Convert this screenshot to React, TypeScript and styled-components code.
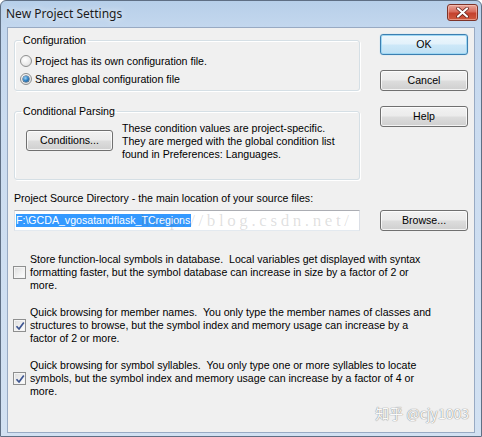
import styled, { createGlobalStyle, css } from 'styled-components';

const GlobalStyle = createGlobalStyle`
	html, body {
		margin: 0;
		padding: 0;
		background: #ffffff;
	}
	* {
		box-sizing: border-box;
	}
`;

const uiFont = `"Liberation Sans", Arial, sans-serif`;

const checkItems = [
	[
		'Store function-local symbols in database.  Local variables get displayed with syntax',
		'formatting faster, but the symbol database can increase in size by a factor of 2 or',
		'more.',
	],
	[
		'Quick browsing for member names.  You only type the member names of classes and',
		'structures to browse, but the symbol index and memory usage can increase by a',
		'factor of 2 or more.',
	],
	[
		'Quick browsing for symbol syllables.  You only type one or more syllables to locate',
		'symbols, but the symbol index and memory usage can increase by a factor of 4 or',
		'more.',
	],
];

const conditionNote = [
	'These condition values are project-specific.',
	'They are merged with the global condition list',
	'found in Preferences: Languages.',
];

export default function App() {
	return (
		<>
			<GlobalStyle />
			<Window>
				<TitleBar>
					<Title>New Project Settings</Title>
					<CloseButton aria-label="Close">
						<svg width="13" height="11" viewBox="0 0 13 11">
							<path d="M2 1.5 L11 9.5 M11 1.5 L2 9.5" stroke="#5a1d16" strokeWidth="3.6" strokeLinecap="round" />
							<path d="M2 1.5 L11 9.5 M11 1.5 L2 9.5" stroke="#ffffff" strokeWidth="2.2" strokeLinecap="round" />
						</svg>
					</CloseButton>
				</TitleBar>

				<Client>
					<TopGrid>
						<LeftColumn>
							<GroupBox>
								<Caption>Configuration</Caption>
								<RadioList>
									<OptionRow>
										<Radio />
										<span>Project has its own configuration file.</span>
									</OptionRow>
									<OptionRow>
										<Radio $checked />
										<span>Shares global configuration file</span>
									</OptionRow>
								</RadioList>
							</GroupBox>

							<GroupBox $spaced>
								<Caption>Conditional Parsing</Caption>
								<ConditionRow>
									<Button $width={87} $offset={8}>Conditions...</Button>
									<Lines>
										{conditionNote.map((line) => (
											<div key={line}>{line}</div>
										))}
									</Lines>
								</ConditionRow>
							</GroupBox>

							<FieldLabel>Project Source Directory - the main location of your source files:</FieldLabel>
							<PathInput>
								<Selected>F:\GCDA_vgosatandflask_TCregions</Selected>
								<BlogMark>http://blog.csdn.net/</BlogMark>
							</PathInput>
						</LeftColumn>

						<ButtonColumn>
							<Button $primary>OK</Button>
							<Button>Cancel</Button>
							<Button>Help</Button>
							<Button $pushDown>Browse...</Button>
						</ButtonColumn>
					</TopGrid>

					<CheckList>
						{checkItems.map((lines, i) => (
							<CheckRow key={i}>
								<CheckBox>
									{i > 0 && (
										<svg width="10" height="10" viewBox="0 0 10 10">
											<path d="M1.5 5.2 L4 8 L8.8 1.6" fill="none" stroke="#3d5591" strokeWidth="1.7" strokeLinejoin="round" />
										</svg>
									)}
								</CheckBox>
								<Lines>
									{lines.map((line) => (
										<div key={line}>{line}</div>
									))}
								</Lines>
							</CheckRow>
						))}
					</CheckList>

					<ZhihuMark>知乎 @cjy1003</ZhihuMark>
				</Client>
			</Window>
		</>
	);
}

const Window = styled.div`
	width: 482px;
	height: 437px;
	display: flex;
	flex-direction: column;
	border: 1px solid #5f6f84;
	border-radius: 6px 6px 0 0;
	background: linear-gradient(180deg, #b7cfe9 0px, #c3d7ee 26px, #cbdcf0 120px, #d2e1f2 100%);
	font-family: ${uiFont};
	font-size: 10.6px;
	line-height: 13px;
	color: #000;
`;

const TitleBar = styled.div`
	height: 26px;
	display: flex;
	align-items: flex-start;
	justify-content: space-between;
	padding: 0 3px 0 5px;
`;

const Title = styled.span`
	font-family: "Noto Sans", "Open Sans", sans-serif;
	font-size: 12px;
	line-height: 16px;
	margin-top: 5px;
	color: #1b1b1b;
	text-shadow: 0 0 6px rgba(255, 255, 255, 0.9);
`;

const CloseButton = styled.div`
	width: 31px;
	height: 17px;
	margin-top: 3px;
	display: flex;
	align-items: center;
	justify-content: center;
	border: 1px solid #7d3328;
	border-radius: 3px;
	background: linear-gradient(180deg, #e8a89c 0%, #d86b5b 45%, #c4412d 55%, #cf5a3e 100%);
	box-shadow: inset 0 0 0 1px rgba(255, 210, 200, 0.5);
`;

const Client = styled.div`
	position: relative;
	height: 406px;
	margin: 0 6px;
	padding: 6px 6px 0 6px;
	border: 1px solid #98aac3;
	background: #f0f0f0;
`;

const TopGrid = styled.div`
	display: grid;
	grid-template-columns: 346px 88px;
	column-gap: 20px;
`;

const LeftColumn = styled.div`
	display: flex;
	flex-direction: column;
`;

const GroupBox = styled.fieldset<{ $spaced?: boolean }>`
	margin: ${(p) => (p.$spaced ? '14px' : '0')} 0 0 0;
	padding: 0;
	min-width: 0;
	border: 1px solid #d5dfe5;
	border-radius: 3px;
	box-shadow: inset 1px 1px 0 #ffffff, 1px 1px 0 #ffffff;
`;

const Caption = styled.legend`
	margin-left: 6px;
	padding: 0 2px;
	line-height: 13px;
`;

const RadioList = styled.div`
	display: flex;
	flex-direction: column;
	padding: 5px 0 2px 5px;
`;

const OptionRow = styled.div`
	height: 18px;
	display: flex;
	align-items: center;
	gap: 3px;
`;

const Radio = styled.span<{ $checked?: boolean }>`
	position: relative;
	width: 12px;
	height: 12px;
	border-radius: 50%;
	border: 1px solid #8e8f8f;
	background: radial-gradient(circle at 40% 35%, #ffffff 0%, #ececec 55%, #d2d2d2 100%);

	${(p) =>
		p.$checked &&
		css`
			&::after {
				content: '';
				position: absolute;
				left: 2px;
				top: 2px;
				width: 6px;
				height: 6px;
				border-radius: 50%;
				background: radial-gradient(circle at 40% 35%, #9fd4f5 0%, #2d7fc3 50%, #16466f 100%);
				box-shadow: 0 0 0 0.5px #1d3b5c;
			}
		`}
`;

const ConditionRow = styled.div`
	display: flex;
	align-items: flex-start;
	gap: 9px;
	padding: 4px 0 18px 11px;
`;

const Lines = styled.div`
	white-space: pre;
	line-height: 13px;
`;

const Button = styled.div<{ $primary?: boolean; $width?: number; $offset?: number; $pushDown?: boolean }>`
	width: ${(p) => (p.$width ? `${p.$width}px` : '100%')};
	height: 21px;
	margin-top: ${(p) => (p.$offset ? `${p.$offset}px` : '0')};
	flex-shrink: 0;
	display: flex;
	align-items: center;
	justify-content: center;
	border: 1px solid #707070;
	border-radius: 3px;
	background: linear-gradient(180deg, #f2f2f2 0%, #ebebeb 48%, #dddddd 52%, #cfcfcf 100%);
	box-shadow: inset 0 0 0 1px rgba(255, 255, 255, 0.75);

	${(p) =>
		p.$pushDown &&
		css`
			margin-top: auto;
		`}

	${(p) =>
		p.$primary &&
		css`
			border-color: #3c7fb1;
			background: linear-gradient(180deg, #eef7fc 0%, #e2f1fb 48%, #cde8f8 52%, #bfe0f4 100%);
			box-shadow: inset 0 0 0 1px #9fd7f3, 0 0 1px #7ec0e6;
		`}
`;

const ButtonColumn = styled.div`
	display: flex;
	flex-direction: column;
	gap: 15px;
`;

const FieldLabel = styled.div`
	margin-top: 12px;
	line-height: 13px;
`;

const PathInput = styled.div`
	position: relative;
	height: 21px;
	margin-top: 5px;
	display: flex;
	align-items: center;
	padding-left: 1px;
	border: 1px solid #dbdfe6;
	border-top-color: #abadb3;
	border-bottom-color: #e3e9ef;
	background: #ffffff;
	overflow: hidden;
`;

const Selected = styled.span`
	background: #3399ff;
	color: #ffffff;
	line-height: 13px;
	padding-right: 1px;
`;

const BlogMark = styled.span`
	position: absolute;
	left: 126px;
	top: 0;
	font-family: "Liberation Serif", serif;
	font-size: 17px;
	line-height: 19px;
	letter-spacing: 3.6px;
	color: rgba(110, 110, 110, 0.22);
	pointer-events: none;
`;

const CheckList = styled.div`
	display: flex;
	flex-direction: column;
	gap: 14px;
	margin: 22px 0 0 -1px;
`;

const CheckRow = styled.div`
	display: flex;
	align-items: center;
	gap: 4px;
`;

const CheckBox = styled.span`
	width: 13px;
	height: 13px;
	flex-shrink: 0;
	display: flex;
	align-items: center;
	justify-content: center;
	border: 1px solid #8e8f8f;
	background: linear-gradient(135deg, #dcdcdc 0%, #f2f2f2 60%, #ffffff 100%);
	box-shadow: inset 0 0 0 1px #f4f4f4;
`;

const ZhihuMark = styled.span`
	position: absolute;
	right: 5px;
	bottom: 10px;
	font-family: "Noto Sans CJK SC", "Noto Sans", sans-serif;
	font-size: 14px;
	line-height: 18px;
	color: #fafafa;
	text-shadow: 0 0 1px #8a8a8a, 0 0 1px #8a8a8a;
`;
